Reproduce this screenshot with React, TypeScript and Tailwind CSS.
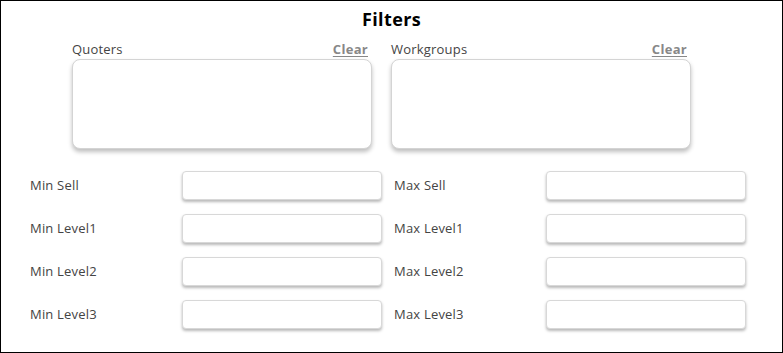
const rows = [
  ['Min Sell', 'Max Sell'],
  ['Min Level1', 'Max Level1'],
  ['Min Level2', 'Max Level2'],
  ['Min Level3', 'Max Level3'],
];

function ListBox({ label }: { label: string }) {
  return (
    <div className="flex flex-col">
      <div className="flex items-end justify-between h-[17px] pr-[4px]">
        <span className="text-[13px] leading-none text-[#444] tracking-[0.2px]">{label}</span>
        <a className="text-[13px] leading-none font-bold text-[#888] underline underline-offset-2 cursor-pointer tracking-[0.3px]">
          Clear
        </a>
      </div>
      <div className="mt-[3px] h-[90px] rounded-[8px] border border-[#d4d4d4] bg-white shadow-[0_3px_4px_rgba(0,0,0,0.25)]" />
    </div>
  );
}

function Field({ label }: { label: string }) {
  return (
    <div className="flex items-center">
      <span className="w-[152px] text-[13px] text-[#444] tracking-[0.2px]">{label}</span>
      <input className="w-[200px] h-[29px] rounded-[4px] border border-[#d8d8d8] bg-white shadow-[0_2px_3px_rgba(0,0,0,0.28)] outline-none" />
    </div>
  );
}

export default function App() {
  return (
    <div
      className="w-[783px] h-[353px] border border-black bg-white"
      style={{ fontFamily: '"Open Sans", "Liberation Sans", sans-serif' }}
    >
      <h1 className="text-center text-[18px] font-bold text-black leading-none pt-[9px] tracking-[0.4px]">Filters</h1>
      <div className="grid grid-cols-[300px_300px] gap-[19px] pl-[71px] mt-[11px]">
        <ListBox label="Quoters" />
        <ListBox label="Workgroups" />
      </div>
      <div className="flex flex-col gap-[14px] pl-[29px] mt-[22px]">
        {rows.map(([a, b]) => (
          <div key={a} className="flex gap-[12px]">
            <Field label={a} />
            <Field label={b} />
          </div>
        ))}
      </div>
    </div>
  );
}
